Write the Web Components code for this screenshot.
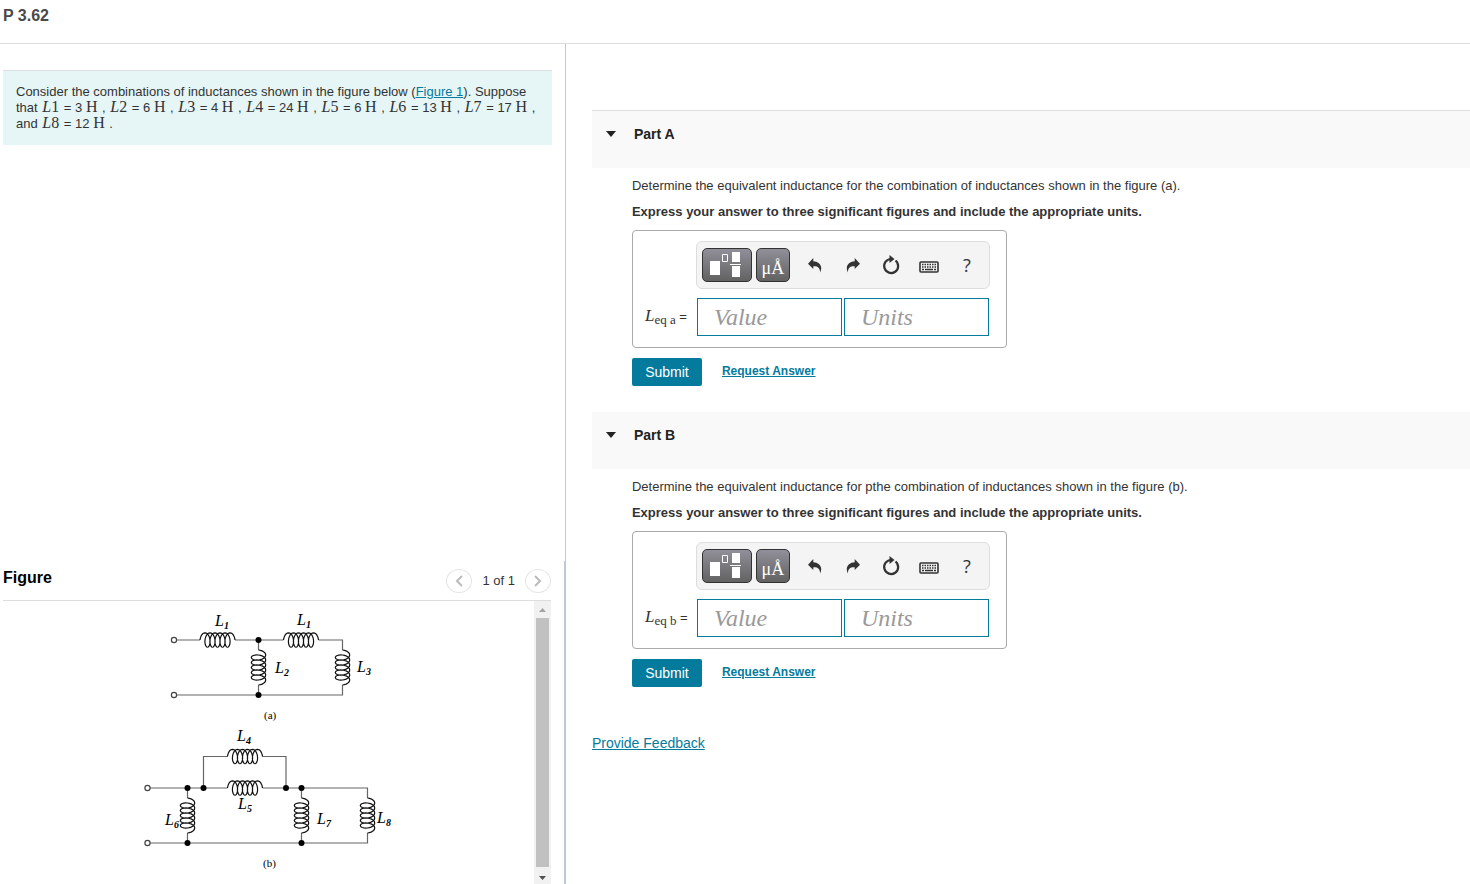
<!DOCTYPE html>
<html lang="en">
<head>
<meta charset="utf-8">
<meta name="viewport" content="width=device-width, initial-scale=1">
<title>P 3.62</title>
<style>
    body {
        margin: 0;
        background: #fff;
        color: #333;
        font: 13px/16px "Liberation Sans", Arial, sans-serif;
    }
</style>
</head>
<body>
<problem-page>
    <span slot="title">P 3.62</span>
    <problem-intro slot="side">
        Consider the combinations of inductances shown in the figure below (<a href="#figure">Figure 1</a>). Suppose
        <span>that</span> <math-var n="1"></math-var> = 3 <math-unit>H</math-unit> , <math-var n="2"></math-var> = 6 <math-unit>H</math-unit> , <math-var n="3"></math-var> = 4 <math-unit>H</math-unit> , <math-var n="4"></math-var> = 24 <math-unit>H</math-unit> , <math-var n="5"></math-var> = 6 <math-unit>H</math-unit> , <math-var n="6"></math-var> = 13 <math-unit>H</math-unit> , <math-var n="7"></math-var> = 17 <math-unit>H</math-unit> ,
        <span>and</span> <math-var n="8"></math-var> = 12 <math-unit>H</math-unit> .
    </problem-intro>
    <figure-panel slot="side" id="figure">
        <circuit-diagram></circuit-diagram>
    </figure-panel>
    <problem-part heading="Part A" sub="eq a">
        <span slot="question">Determine the equivalent inductance for the combination of inductances shown in the figure (a).</span>
        <span slot="hint">Express your answer to three significant figures and include the appropriate units.</span>
    </problem-part>
    <problem-part heading="Part B" sub="eq b">
        <span slot="question">Determine the equivalent inductance for pthe combination of inductances shown in the figure (b).</span>
        <span slot="hint">Express your answer to three significant figures and include the appropriate units.</span>
    </problem-part>
    <feedback-link href="#feedback">Provide Feedback</feedback-link>
</problem-page>

<script>
(function () {
    // small helper: define an element whose shadow root is a clone of the markup
    function define(name, html, setup) {
        const template = document.createElement('template');
        template.innerHTML = html;

        customElements.define(name, class extends HTMLElement {
            constructor() {
                super();
                this.attachShadow({ mode: 'open' });
                this.shadowRoot.appendChild(template.content.cloneNode(true));
            }
            connectedCallback() {
                if (setup) setup(this, this.shadowRoot);
            }
        });
    }

    define('problem-page', `
        <style>
            :host {
                display: flex;
                flex-direction: column;
                height: 100vh;
                overflow: hidden;
            }
            header {
                padding: 6px 3px 17px;
                border-bottom: 1px solid #ddd;
            }
            h1 {
                margin: 0;
                font-size: 16px;
                line-height: 20px;
                color: #494949;
            }
            .columns {
                flex: 1;
                min-height: 0;
                display: grid;
                grid-template-columns: 77fr 123fr;
            }
            aside {
                display: flex;
                flex-direction: column;
                justify-content: space-between;
                min-height: 0;
                padding-top: 26px;
                border-right: 1px solid #b9cadb;
            }
            main {
                min-height: 0;
                overflow: hidden auto;
                padding: 66px 0 0 26px;
            }
        </style>
        <header><h1><slot name="title"></slot></h1></header>
        <div class="columns">
            <aside><slot name="side"></slot></aside>
            <main><slot></slot></main>
        </div>`);

    define('problem-intro', `
        <style>
            :host {
                display: block;
                margin: 0 13px 0 3px;
                padding: 13px;
                border-top: 1px solid #ddd;
                background: #e6f6f7;
            }
            ::slotted(a) {
                color: #047a9c;
            }
        </style>
        <slot></slot>`);

    define('math-var', `
        <style>
            :host {
                margin: 0 1px;
                font: 16px/0 "Liberation Serif", "Times New Roman", serif;
            }
        </style>
        <i>L</i><span></span>`, (host, root) => {
        root.querySelector('span').textContent = host.getAttribute('n');
    });

    define('math-unit', `
        <style>
            :host {
                margin-right: 1px;
                font: 16px/0 "Liberation Serif", "Times New Roman", serif;
            }
        </style>
        <slot></slot>`);

    define('figure-panel', `
        <style>
            :host {
                display: flex;
                flex-direction: column;
                flex: 0 1 323px;
                min-height: 0;
                padding: 0 13px 0 3px;
                border-right: 1px solid #b9cadb;
            }
            .bar {
                display: flex;
                align-items: center;
                justify-content: space-between;
                height: 39px;
                border-bottom: 1px solid #ddd;
            }
            h2 {
                margin: 0;
                padding-bottom: 6px;
                font-size: 16px;
                line-height: 20px;
                color: #000;
            }
            nav {
                display: flex;
                align-items: center;
                gap: 10px;
            }
            nav button {
                display: grid;
                place-items: center;
                width: 26px;
                height: 24px;
                padding: 0;
                border: 1px solid #e5e5e5;
                border-radius: 50%;
                background: #fff;
            }
            .body {
                flex: 1;
                min-height: 0;
                display: flex;
            }
            .view {
                flex: 1;
                overflow: hidden;
                text-align: center;
            }
            .scroll {
                display: flex;
                flex-direction: column;
                align-items: center;
                justify-content: space-between;
                width: 17px;
                background: #f1f1f1;
            }
            .scroll svg {
                display: block;
                flex: none;
            }
            .thumb {
                flex: 1;
                width: 13px;
                background: #c1c1c1;
            }
        </style>
        <div class="bar">
            <h2>Figure</h2>
            <nav>
                <button aria-label="Previous figure"><svg width="8" height="12" viewBox="0 0 8 12"><path d="M7 1L2 6l5 5" fill="none" stroke="#bbb" stroke-width="2"/></svg></button>
                <span>1 of 1</span>
                <button aria-label="Next figure"><svg width="8" height="12" viewBox="0 0 8 12"><path d="M1 1l5 5-5 5" fill="none" stroke="#bbb" stroke-width="2"/></svg></button>
            </nav>
        </div>
        <div class="body">
            <div class="view"><slot></slot></div>
            <div class="scroll" aria-hidden="true">
                <svg width="17" height="17"><path d="M5 11l3.500-4 3.500 4z" fill="#a3a3a3"/></svg>
                <div class="thumb"></div>
                <svg width="17" height="17"><path d="M5 9h7l-3.500 4z" fill="#505050"/></svg>
            </div>
        </div>`);

    // A coil is 35 units long: five loops between two leads on the wire.
    function coilPath() {
        const pitch = 5, rx = 3.75, ry = 7.2;
        let d = '';
        for (let i = 0; i <= 132; i++) {
            const a = i / 12 * Math.PI;
            const x = rx + pitch * a / (2 * Math.PI) - rx * Math.cos(a);
            const y = -ry * Math.sin(a);
            d += (i ? 'L' : 'M') + x.toFixed(2) + ' ' + y.toFixed(2);
        }
        return d;
    }

    const coil = (x, y, turn) =>
        `<path class="coil" d="${coilPath()}" transform="translate(${x} ${y}) rotate(${turn || 0})"/>`;
    const dot = (x, y) => `<circle cx="${x}" cy="${y}" r="3"/>`;
    const terminal = (x, y) => `<circle class="open" cx="${x}" cy="${y}" r="2.600"/>`;
    const label = (x, y, n) =>
        `<text class="name" x="${x}" y="${y}">L<tspan class="sub" dy="3">${n}</tspan></text>`;

    define('circuit-diagram', `
        <style>
            :host {
                display: block;
            }
            svg {
                display: block;
                margin: 0 auto;
                font-family: "Liberation Serif", "Times New Roman", serif;
            }
            .wire, .open {
                fill: none;
                stroke: #666;
                stroke-width: 1.2;
            }
            .open {
                fill: #fff;
                stroke: #444;
            }
            .coil {
                fill: none;
                stroke: #111;
                stroke-width: 1.2;
            }
            .name {
                font-size: 16px;
                font-style: italic;
            }
            .sub {
                font-size: 10px;
                font-weight: bold;
            }
            .caption {
                font-size: 11px;
            }
        </style>
        <svg width="270" height="283" viewBox="133 601 270 283" role="img" aria-label="Circuits (a) and (b)">
            <path class="wire" d="M176 640H200M235 640H283.500M318.500 640H342.500V650M342.500 685V695H176M258.500 640V650M258.500 685V695"/>
            ${coil(200, 640)}${coil(283.5, 640)}${coil(258.5, 650, 90)}${coil(342.5, 650, 90)}
            ${dot(258.5, 640)}${dot(258.5, 695)}
            ${terminal(174, 640)}${terminal(174, 695)}
            ${label(215, 626, 1)}${label(297, 625, 1)}${label(275, 673, 2)}${label(357, 672, 3)}
            <text class="caption" x="264" y="719">(a)</text>

            <path class="wire" d="M150 788H227.500M262.500 788H367.500V798M367.500 833V843H150M203.500 788V756.500H227.500M262.500 756.500H286V788M187.500 788V798M187.500 833V843M301.500 788V798M301.500 833V843"/>
            ${coil(227.5, 756.5)}${coil(227.5, 788)}${coil(187.5, 798, 90)}${coil(301.5, 798, 90)}${coil(367.5, 798, 90)}
            ${dot(187.5, 788)}${dot(203.5, 788)}${dot(286, 788)}${dot(301.5, 788)}${dot(187.5, 843)}${dot(301.5, 843)}
            ${terminal(147.5, 788)}${terminal(147.5, 843)}
            ${label(237, 741, 4)}${label(238, 809, 5)}${label(165, 825, 6)}${label(317, 824, 7)}${label(377, 823, 8)}
            <text class="caption" x="263" y="867">(b)</text>
        </svg>`);

    define('math-toolbar', `
        <style>
            :host {
                display: flex;
                align-items: center;
                gap: 4px;
                box-sizing: border-box;
                height: 48px;
                padding: 0 2px 0 5px;
                border: 1px solid #ddd;
                border-radius: 6px;
                background: #f4f4f4;
            }
            button {
                display: grid;
                place-items: center;
                width: 38px;
                height: 34px;
                padding: 0;
                border: 0;
                background: none;
                color: #333;
                font: 18px/20px "Open Sans", "Liberation Sans", sans-serif;
            }
            .dark {
                width: 34px;
                border: 1px solid #333;
                border-radius: 5px;
                background: linear-gradient(#918f99, #626262);
                color: #fff;
                font-family: "Liberation Serif", "Times New Roman", serif;
            }
            .wide {
                width: 50px;
            }
            .symbols {
                padding-top: 6px;
            }
            .plain {
                display: flex;
                margin-left: 2px;
            }
        </style>
        <button class="dark wide" aria-label="Templates">
            <svg width="34" height="26" viewBox="0 0 34 26" fill="#fff">
                <path d="M0 9h10v14H0zM22 0h8v10h-8zM20 12h11v1H20zM22 14h8v11h-8z"/>
                <path d="M12.500 2.500h5v7h-5z" fill="none" stroke="#fff"/>
            </svg>
        </button>
        <button class="dark symbols" aria-label="Symbols">μÅ</button>
        <div class="plain">
            <button aria-label="Undo"><svg width="14" height="15" viewBox="0 0 14 15"><path d="M0 5.700L5.300 0v3.200C11 3.500 15.500 8 12 14.500 12.200 10 10 8 5.300 8.300V11z" fill="#333"/></svg></button>
            <button aria-label="Redo"><svg width="14" height="15" viewBox="0 0 14 15"><path d="M14 5.700L8.700 0v3.200C3 3.500-1.500 8 2 14.500 1.800 10 4 8 8.700 8.300V11z" fill="#333"/></svg></button>
            <button aria-label="Reset"><svg width="18" height="20" viewBox="0 0 18 20"><path d="M13.500 5.500A7 7 0 1 1 9 4" fill="none" stroke="#333" stroke-width="2.200"/><path d="M7.500 0l5 4-5 4z" fill="#333"/></svg></button>
            <button aria-label="Keyboard"><svg width="20" height="16" viewBox="0 -4 20 16"><rect x="1" y="1" width="18" height="10" rx="1" fill="none" stroke="#333" stroke-width="1.600"/><path d="M3 3.500h14M3 6h14" stroke="#333" stroke-width="1.500" stroke-dasharray="1.500 1"/><path d="M3 8.500h2M6 8.500h8M15 8.500h2" stroke="#333" stroke-width="1.300"/></svg></button>
            <button aria-label="Help">?</button>
        </div>`);

    define('problem-part', `
        <style>
            :host {
                display: block;
            }
            :host(:first-of-type) header {
                border-top: 1px solid #ddd;
            }
            header {
                height: 57px;
                background: #f9f9f9;
            }
            h2 {
                margin: 0;
                font-size: 14px;
            }
            .toggle {
                display: flex;
                align-items: center;
                gap: 18px;
                padding: 15px 14px;
                border: 0;
                background: none;
                color: #222;
                font: inherit;
                line-height: 16px;
            }
            .body {
                padding: 10px 0 26px 40px;
            }
            .body[hidden] {
                display: none;
            }
            p {
                margin: 0 0 10px;
            }
            .hint {
                font-weight: bold;
            }
            .answer {
                display: grid;
                grid-template-columns: 51px auto;
                justify-content: start;
                align-items: center;
                row-gap: 9px;
                box-sizing: border-box;
                width: fit-content;
                padding: 10px 16px 11px 12px;
                border: 1px solid #aaa;
                border-radius: 4px;
            }
            math-toolbar {
                grid-column: 2;
            }
            label {
                white-space: nowrap;
            }
            label i, sub {
                font-family: "Liberation Serif", "Times New Roman", serif;
            }
            label i {
                font-size: 17px;
            }
            sub {
                font-size: 13px;
                line-height: 12px;
                vertical-align: -3px;
            }
            .fields {
                display: flex;
                gap: 2px;
                padding: 0 1px;
            }
            input {
                box-sizing: border-box;
                width: 145px;
                height: 38px;
                padding: 0 16px;
                border: 1px solid #047a9c;
                font: 24px/28px "Liberation Serif", "Times New Roman", serif;
            }
            input::placeholder {
                color: #999;
                font-style: italic;
            }
            .actions {
                display: flex;
                gap: 20px;
                margin-top: 10px;
            }
            .submit {
                width: 70px;
                height: 28px;
                padding: 0;
                border: 0;
                border-radius: 2px;
                background: #047a9c;
                color: #fff;
                font: 14px/16px "Liberation Sans", Arial, sans-serif;
            }
            .actions a {
                padding-top: 5px;
                color: #047a9c;
                font-size: 12px;
                font-weight: bold;
            }
        </style>
        <header>
            <h2>
                <button class="toggle" aria-expanded="true">
                    <svg width="10" height="6" viewBox="0 0 10 6"><path d="M0 0h10L5 6z" fill="#222"/></svg>
                    <span class="heading"></span>
                </button>
            </h2>
        </header>
        <div class="body">
            <p><slot name="question"></slot></p>
            <p class="hint"><slot name="hint"></slot></p>
            <div class="answer">
                <math-toolbar></math-toolbar>
                <label for="value"><i>L</i><sub></sub> =</label>
                <div class="fields">
                    <input id="value" placeholder="Value">
                    <input aria-label="Units" placeholder="Units">
                </div>
            </div>
            <div class="actions">
                <button class="submit">Submit</button>
                <a href="#answer">Request Answer</a>
            </div>
        </div>`, (host, root) => {
        const toggle = root.querySelector('.toggle');
        const body = root.querySelector('.body');

        root.querySelector('.heading').textContent = host.getAttribute('heading');
        root.querySelector('sub').textContent = host.getAttribute('sub');
        toggle.addEventListener('click', () => {
            body.hidden = !body.hidden;
            toggle.setAttribute('aria-expanded', String(!body.hidden));
        });
    });

    define('feedback-link', `
        <style>
            :host {
                display: block;
                margin-top: 22px;
                font-size: 14px;
            }
            a {
                color: #047a9c;
            }
        </style>
        <a><slot></slot></a>`, (host, root) => {
        root.querySelector('a').href = host.getAttribute('href');
    });
})();
</script>
</body>
</html>
